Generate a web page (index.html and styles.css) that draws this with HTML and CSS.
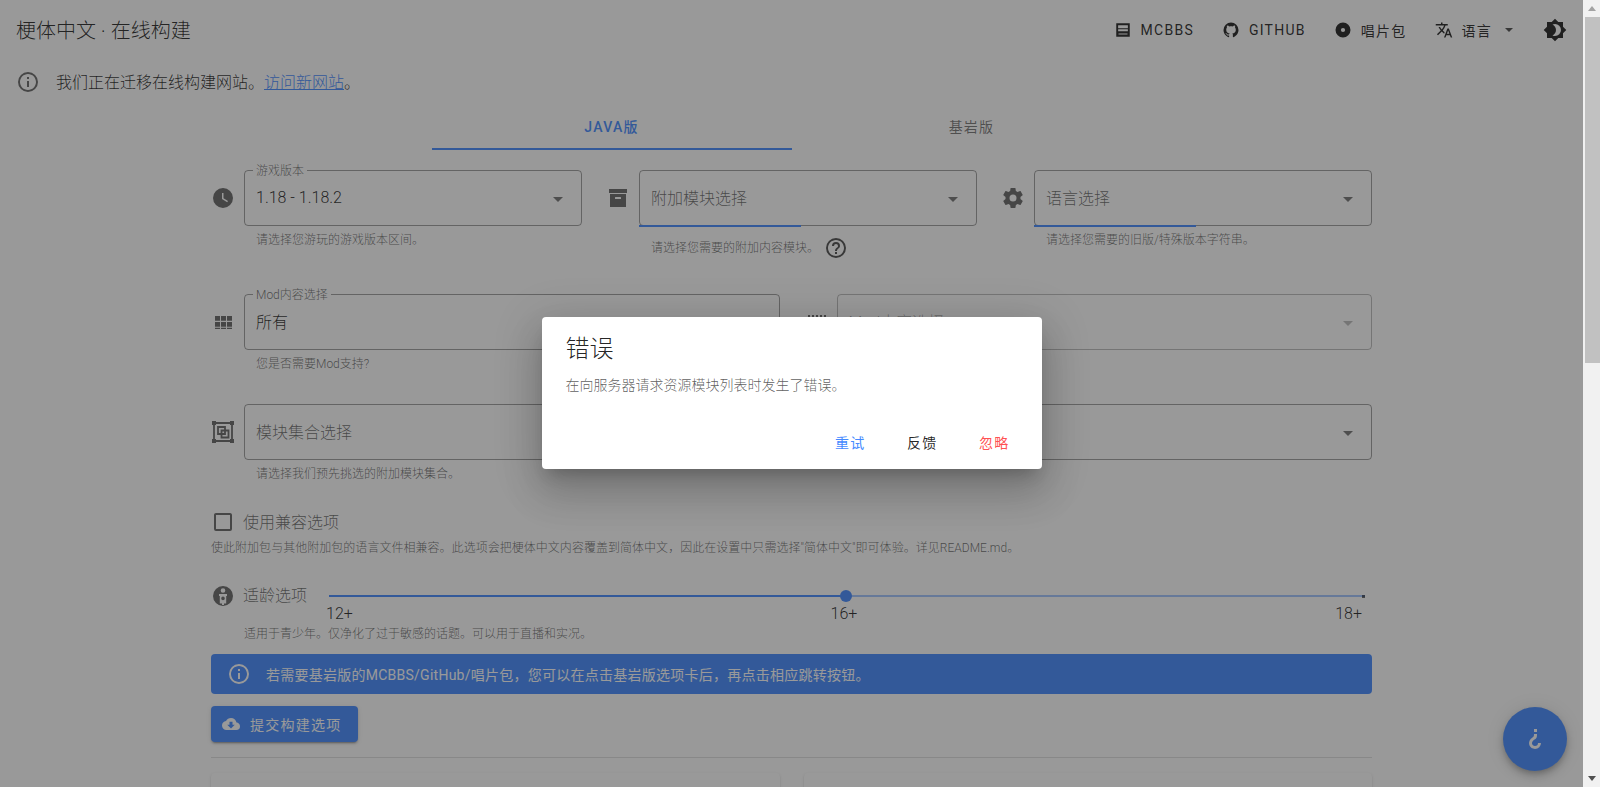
FILE: index.html
```html
<!DOCTYPE html>
<html>

<head>
    <meta charset="UTF-8">
    <title>梗体中文 · 在线构建</title>
    <link rel="stylesheet" href="styles.css">
</head>

<body>

    <div class="page">
        <header class="app-bar">
            <div class="app-title">梗体中文 · 在线构建</div>
            <nav class="app-nav">
                <a class="nav-item">
                    <svg class="nav-icon" viewBox="0 0 24 24"><path fill-rule="evenodd" d="M3,3H21V21H3V3M5.5,5.5V9.5H18.5V5.5H5.5M5.5,11V13.5H18.5V11H5.5M6,16.5V18H18V16.5H6Z"/></svg>
                    <span>MCBBS</span>
                </a>
                <a class="nav-item">
                    <svg class="nav-icon" viewBox="0 0 24 24"><path d="M12,2A10,10 0 0,0 2,12C2,16.42 4.87,20.17 8.84,21.5C9.34,21.58 9.5,21.27 9.5,21C9.5,20.77 9.5,20.14 9.5,19.31C6.73,19.91 6.14,17.97 6.14,17.97C5.68,16.81 5.03,16.5 5.03,16.5C4.12,15.88 5.1,15.9 5.1,15.9C6.1,15.97 6.63,16.93 6.63,16.93C7.5,18.45 8.97,18 9.54,17.76C9.63,17.11 9.89,16.67 10.17,16.42C7.95,16.17 5.62,15.31 5.62,11.5C5.62,10.39 6,9.5 6.65,8.79C6.55,8.54 6.2,7.5 6.75,6.15C6.75,6.15 7.59,5.88 9.5,7.17C10.29,6.95 11.15,6.84 12,6.84C12.85,6.84 13.71,6.95 14.5,7.17C16.41,5.88 17.25,6.15 17.25,6.15C17.8,7.5 17.45,8.54 17.35,8.79C18,9.5 18.38,10.39 18.38,11.5C18.38,15.32 16.04,16.16 13.81,16.41C14.17,16.72 14.5,17.33 14.5,18.26C14.5,19.6 14.5,20.68 14.5,21C14.5,21.27 14.66,21.59 15.17,21.5C19.14,20.16 22,16.42 22,12A10,10 0 0,0 12,2Z"/></svg>
                    <span>GITHUB</span>
                </a>
                <a class="nav-item">
                    <svg class="nav-icon" viewBox="0 0 24 24"><path fill-rule="evenodd" d="M12,2A10,10 0 0,0 2,12A10,10 0 0,0 12,22A10,10 0 0,0 22,12A10,10 0 0,0 12,2M12,9.2A2.8,2.8 0 0,1 14.8,12A2.8,2.8 0 0,1 12,14.8A2.8,2.8 0 0,1 9.2,12A2.8,2.8 0 0,1 12,9.2Z"/></svg>
                    <span>唱片包</span>
                </a>
                <a class="nav-item">
                    <svg class="nav-icon" viewBox="0 0 24 24"><path d="M12.87,15.07L10.33,12.56L10.36,12.53C12.1,10.59 13.34,8.36 14.07,6H17V4H10V2H8V4H1V6H12.17C11.5,7.92 10.44,9.75 9,11.35C8.07,10.32 7.3,9.19 6.69,8H4.69C5.42,9.63 6.42,11.17 7.67,12.56L2.58,17.58L4,19L9,14L12.11,17.11L12.87,15.07M18.5,10H16.5L12,22H14L15.12,19H19.87L21,22H23L18.5,10M15.88,17L17.5,12.67L19.12,17H15.88Z"/></svg>
                    <span>语言</span>
                    <i class="nav-caret"></i>
                </a>
                <svg class="theme-icon" viewBox="0 0 24 24"><path d="M12,18C11.11,18 10.26,17.8 9.5,17.45C11.56,16.5 13,14.42 13,12C13,9.58 11.56,7.5 9.5,6.55C10.26,6.2 11.11,6 12,6A6,6 0 0,1 18,12A6,6 0 0,1 12,18M20,8.69V4H15.31L12,0.69L8.69,4H4V8.69L0.69,12L4,15.31V20H8.69L12,23.31L15.31,20H20V15.31L23.31,12L20,8.69Z"/></svg>
            </nav>
        </header>

        <div class="notice">
            <svg class="icon icon-muted" viewBox="0 0 24 24"><path d="M11,9H13V7H11M12,20C7.59,20 4,16.41 4,12C4,7.59 7.59,4 12,4C16.41,4 20,7.59 20,12C20,16.41 16.41,20 12,20M12,2A10,10 0 0,0 2,12A10,10 0 0,0 12,22A10,10 0 0,0 22,12A10,10 0 0,0 12,2M11,17H13V11H11V17Z"/></svg>
            <p>我们正在迁移在线构建网站。<a class="notice-link">访问新网站</a>。</p>
        </div>

        <div class="tabs">
            <div class="tab tab-active">JAVA版</div>
            <div class="tab">基岩版</div>
        </div>

        <main class="form">
            <div class="row row-3">
                <div class="col">
                    <svg class="icon icon-muted" viewBox="0 0 24 24"><path d="M12,2A10,10 0 0,0 2,12A10,10 0 0,0 12,22A10,10 0 0,0 22,12A10,10 0 0,0 12,2M16.2,16.2L11,13V7H12.5V12.2L17,14.9L16.2,16.2Z"/></svg>
                    <div class="field">
                        <div class="select">
                            <span class="select-label">游戏版本</span>
                            <span class="select-value">1.18 - 1.18.2</span>
                            <i class="caret"></i>
                        </div>
                        <div class="hint">请选择您游玩的游戏版本区间。</div>
                    </div>
                </div>
                <div class="col">
                    <svg class="icon icon-muted" viewBox="0 0 24 24"><path d="M3,3H21V7H3V3M4,8H20V21H4V8M9.5,11A0.5,0.5 0 0,0 9,11.5V13H15V11.5A0.5,0.5 0 0,0 14.5,11H9.5Z"/></svg>
                    <div class="field">
                        <div class="select">
                            <span class="select-placeholder">附加模块选择</span>
                            <i class="caret"></i>
                            <i class="select-loading"></i>
                        </div>
                        <div class="hint hint-help">
                            <span>请选择您需要的附加内容模块。</span>
                            <svg class="icon icon-help" viewBox="0 0 24 24"><path d="M11,18H13V16H11V18M12,2A10,10 0 0,0 2,12A10,10 0 0,0 12,22A10,10 0 0,0 22,12A10,10 0 0,0 12,2M12,20C7.59,20 4,16.41 4,12C4,7.59 7.59,4 12,4C16.41,4 20,7.59 20,12C20,16.41 16.41,20 12,20M12,6A4,4 0 0,0 8,10H10A2,2 0 0,1 12,8A2,2 0 0,1 14,10C14,12 11,11.75 11,15H13C13,12.75 16,12.5 16,10A4,4 0 0,0 12,6Z"/></svg>
                        </div>
                    </div>
                </div>
                <div class="col">
                    <svg class="icon icon-muted" viewBox="0 0 24 24"><path d="M12,15.5A3.5,3.5 0 0,1 8.5,12A3.5,3.5 0 0,1 12,8.5A3.5,3.5 0 0,1 15.5,12A3.5,3.5 0 0,1 12,15.5M19.43,12.97C19.47,12.65 19.5,12.33 19.5,12C19.5,11.67 19.47,11.34 19.43,11L21.54,9.37C21.73,9.22 21.78,8.95 21.66,8.73L19.66,5.27C19.54,5.05 19.27,4.96 19.05,5.05L16.56,6.05C16.04,5.66 15.5,5.32 14.87,5.07L14.5,2.42C14.46,2.18 14.25,2 14,2H10C9.75,2 9.54,2.18 9.5,2.42L9.13,5.07C8.5,5.32 7.96,5.66 7.44,6.05L4.95,5.05C4.73,4.96 4.46,5.05 4.34,5.27L2.34,8.73C2.21,8.95 2.27,9.22 2.46,9.37L4.57,11C4.53,11.34 4.5,11.67 4.5,12C4.5,12.33 4.53,12.65 4.57,12.97L2.46,14.63C2.27,14.78 2.21,15.05 2.34,15.27L4.34,18.73C4.46,18.95 4.73,19.03 4.95,18.95L7.44,17.94C7.96,18.34 8.5,18.68 9.13,18.93L9.5,21.58C9.54,21.82 9.75,22 10,22H14C14.25,22 14.46,21.82 14.5,21.58L14.87,18.93C15.5,18.67 16.04,18.34 16.56,17.94L19.05,18.95C19.27,19.03 19.54,18.95 19.66,18.73L21.66,15.27C21.78,15.05 21.73,14.78 21.54,14.63L19.43,12.97Z"/></svg>
                    <div class="field">
                        <div class="select">
                            <span class="select-placeholder">语言选择</span>
                            <i class="caret"></i>
                            <i class="select-loading"></i>
                        </div>
                        <div class="hint">请选择您需要的旧版/特殊版本字符串。</div>
                    </div>
                </div>
            </div>

            <div class="row row-2">
                <div class="col">
                    <svg class="icon icon-muted" viewBox="0 0 24 24"><path d="M4,6H9V10.8H4V6M10,6H15V10.8H10V6M16,6H21V10.8H16V6M4,11.9H9V16.7H4V11.9M10,11.9H15V16.7H10V11.9M16,11.9H21V16.7H16V11.9M4,17.8H9V19H4V17.8M10,17.8H15V19H10V17.8M16,17.8H21V19H16V17.8Z"/></svg>
                    <div class="field">
                        <div class="select">
                            <span class="select-label">Mod内容选择</span>
                            <span class="select-value">所有</span>
                            <i class="caret"></i>
                        </div>
                        <div class="hint">您是否需要Mod支持?</div>
                    </div>
                </div>
                <div class="col">
                    <svg class="icon icon-muted" viewBox="0 0 24 24"><path d="M4,5H6V19H4V5M8,5H10V19H8V5M12,5H14V19H12V5M16,5H18V19H16V5M20,5H22V19H20V5Z"/></svg>
                    <div class="field">
                        <div class="select select-disabled">
                            <span class="select-placeholder">Mod内容选择</span>
                            <i class="caret"></i>
                        </div>
                    </div>
                </div>
            </div>

            <div class="row row-2 row-last">
                <div class="col">
                    <svg class="icon icon-group" viewBox="0 0 24 24">
                        <path class="group-lines" d="M3,3H21V21H3ZM7,7H14V14H7ZM10.5,10.5H17.5V17.5H10.5Z"/>
                        <path d="M1,1H5V5H1ZM19,1H23V5H19ZM1,19H5V23H1ZM19,19H23V23H19Z"/>
                    </svg>
                    <div class="field">
                        <div class="select">
                            <span class="select-placeholder">模块集合选择</span>
                            <i class="caret"></i>
                        </div>
                        <div class="hint">请选择我们预先挑选的附加模块集合。</div>
                    </div>
                </div>
                <div class="col">
                    <span class="icon"></span>
                    <div class="field">
                        <div class="select">
                            <i class="caret"></i>
                        </div>
                    </div>
                </div>
            </div>

            <label class="check">
                <svg class="icon icon-muted" viewBox="0 0 24 24"><path d="M19,3H5C3.89,3 3,3.89 3,5V19A2,2 0 0,0 5,21H19A2,2 0 0,0 21,19V5C21,3.89 20.1,3 19,3M19,5V19H5V5H19Z"/></svg>
                <span>使用兼容选项</span>
            </label>
            <div class="check-hint">使此附加包与其他附加包的语言文件相兼容。此选项会把梗体中文内容覆盖到简体中文，因此在设置中只需选择"简体中文"即可体验。详见README.md。</div>

            <div class="age">
                <svg class="icon icon-muted" viewBox="0 0 24 24"><path fill-rule="evenodd" d="M12,2A10,10 0 0,0 2,12A10,10 0 0,0 12,22A10,10 0 0,0 22,12A10,10 0 0,0 12,2M12,4.2A2.3,2.3 0 0,1 14.3,6.5A2.3,2.3 0 0,1 12,8.8A2.3,2.3 0 0,1 9.7,6.5A2.3,2.3 0 0,1 12,4.2M8,10H16V12H15.2V19.5H13V21H11V19.5H8.8V12H8V10M12,12.6A1.8,1.8 0 0,0 10.2,14.4A1.8,1.8 0 0,0 12,16.2A1.8,1.8 0 0,0 13.8,14.4A1.8,1.8 0 0,0 12,12.6Z"/></svg>
                <span class="age-label">适龄选项</span>
                <div class="slider">
                    <div class="slider-track">
                        <i class="slider-fill"></i>
                        <i class="slider-rest"></i>
                        <i class="slider-thumb"></i>
                        <i class="slider-end"></i>
                    </div>
                    <div class="slider-ticks">
                        <span>12+</span>
                        <span>16+</span>
                        <span>18+</span>
                    </div>
                </div>
            </div>
            <div class="age-hint">适用于青少年。仅净化了过于敏感的话题。可以用于直播和实况。</div>

            <div class="banner">
                <svg class="icon icon-light" viewBox="0 0 24 24"><path d="M11,9H13V7H11M12,20C7.59,20 4,16.41 4,12C4,7.59 7.59,4 12,4C16.41,4 20,7.59 20,12C20,16.41 16.41,20 12,20M12,2A10,10 0 0,0 2,12A10,10 0 0,0 12,22A10,10 0 0,0 22,12A10,10 0 0,0 12,2M11,17H13V11H11V17Z"/></svg>
                <span>若需要基岩版的MCBBS/GitHub/唱片包，您可以在点击基岩版选项卡后，再点击相应跳转按钮。</span>
            </div>

            <button class="btn-submit">
                <svg class="btn-icon" viewBox="0 0 24 24"><path d="M17,13L12,18L7,13H10V9H14V13M19.35,10.03C18.67,6.59 15.64,4 12,4C9.11,4 6.6,5.64 5.35,8.03C2.34,8.36 0,10.9 0,14A6,6 0 0,0 6,20H19A5,5 0 0,0 24,15C24,12.36 21.95,10.22 19.35,10.03Z"/></svg>
                提交构建选项
            </button>

            <hr class="divider">

            <div class="cards">
                <div class="card"></div>
                <div class="card"></div>
            </div>
        </main>

        <button class="fab">
            <svg class="icon icon-fab" viewBox="0 0 24 24"><path d="M10,19H13V22H10V19M12,2C17.35,2.22 19.68,7.62 16.5,11.67C15.67,12.67 14.33,13.33 13.67,14.17C13,15 13,16 13,17H10C10,15.33 10,13.92 10.67,12.92C11.33,11.92 12.67,11.33 13.5,10.67C15.92,8.43 15.32,5.26 12,5A3,3 0 0,0 9,8H6A6,6 0 0,1 12,2Z"/></svg>
        </button>

        <div class="scrim"></div>

        <div class="dialog-wrap">
            <div class="dialog">
                <div class="dialog-title">错误</div>
                <div class="dialog-text">在向服务器请求资源模块列表时发生了错误。</div>
                <div class="dialog-actions">
                    <button class="btn-text btn-retry">重试</button>
                    <button class="btn-text">反馈</button>
                    <button class="btn-text btn-ignore">忽略</button>
                </div>
            </div>
        </div>
    </div>

    <aside class="scrollbar">
        <i class="scroll-up"></i>
        <div class="scroll-track"><div class="scroll-thumb"></div></div>
        <i class="scroll-down"></i>
    </aside>

</body>

</html>
```

FILE: styles.css
```css
/* Basic Reset */
* {
    box-sizing: border-box;
    margin: 0;
    padding: 0;
}

body {
    display: flex;
    height: 787px;
    overflow: hidden;
    background: #fff;
    color: rgba(0, 0, 0, 0.87);
    font-family: Roboto, "Noto Sans CJK SC", sans-serif;
    font-size: 16px;
    font-weight: 300;
}

.page {
    position: relative;
    flex: 1;
    min-width: 0;
    overflow: hidden;
}

/* App bar */
.app-bar {
    display: flex;
    align-items: center;
    justify-content: space-between;
    height: 60px;
    padding: 0 16px;
}

.app-title {
    padding-bottom: 2px;
    font-size: 20px;
}

.app-nav {
    display: flex;
    align-items: center;
}

.nav-item {
    display: flex;
    align-items: center;
    margin-left: 28px;
    font-size: 14px;
    font-weight: 400;
    letter-spacing: 1.25px;
    color: rgba(0, 0, 0, 0.87);
}

.nav-icon {
    width: 18px;
    height: 18px;
    margin-right: 9px;
    fill: rgba(0, 0, 0, 0.87);
}

.nav-caret {
    display: block;
    width: 0;
    height: 0;
    margin: 0 9px 0 13px;
    border-left: 4px solid transparent;
    border-right: 4px solid transparent;
    border-top: 4px solid rgba(0, 0, 0, 0.7);
}

.theme-icon {
    width: 24px;
    height: 24px;
    margin-left: 21px;
    fill: rgba(0, 0, 0, 0.87);
}

/* Icons */
.icon {
    display: block;
    flex: none;
    width: 24px;
    height: 24px;
}

.icon-muted {
    fill: rgba(0, 0, 0, 0.6);
}

.icon-group {
    fill: rgb(102, 102, 102);
}

.group-lines {
    fill: none;
    stroke: rgb(102, 102, 102);
    stroke-width: 1.8;
}

.icon-help {
    margin-left: 5px;
    fill: rgba(0, 0, 0, 0.7);
}

.icon-light {
    fill: #fff;
}

.icon-fab {
    fill: #fff;
    transform: rotate(180deg);
}

/* Migration notice */
.notice {
    display: flex;
    align-items: center;
    gap: 16px;
    height: 44px;
    padding: 0 16px;
}

.notice p {
    padding-bottom: 2px;
}

.notice-link {
    color: #448aff;
    text-decoration: underline;
}

/* Tabs */
.tabs {
    display: grid;
    grid-template-columns: 360px 360px;
    justify-content: center;
    height: 46px;
}

.tab {
    display: flex;
    align-items: center;
    justify-content: center;
    padding-bottom: 2px;
    font-size: 14px;
    font-weight: 400;
    letter-spacing: 1.25px;
    color: rgba(0, 0, 0, 0.54);
}

.tab-active {
    color: #448aff;
    font-weight: 500;
    border-bottom: 2px solid #448aff;
    padding-bottom: 0;
}

/* Form */
.form {
    width: 1161px;
    margin: 20px auto 0;
}

.row {
    display: grid;
    gap: 24px;
    margin-bottom: 34px;
}

.row-last {
    margin-bottom: 30px;
}

.row-3 {
    grid-template-columns: repeat(3, 1fr);
}

.row-2 {
    grid-template-columns: repeat(2, 1fr);
}

.col {
    display: flex;
    align-items: flex-start;
    gap: 9px;
}

.col > .icon {
    margin-top: 16px;
}

.field {
    flex: 1;
    min-width: 0;
}

.select {
    position: relative;
    display: flex;
    align-items: center;
    height: 56px;
    padding: 0 11px;
    border: 1px solid rgba(0, 0, 0, 0.38);
    border-radius: 4px;
}

.select-label {
    position: absolute;
    top: -6px;
    left: 8px;
    padding: 0 3px;
    background: #fff;
    font-size: 12px;
    line-height: 12px;
    color: rgba(0, 0, 0, 0.6);
}

.select-value {
    padding-bottom: 2px;
}

.select-placeholder {
    padding-bottom: 3px;
    color: rgba(0, 0, 0, 0.6);
}

.caret {
    position: absolute;
    top: 26px;
    right: 18px;
    width: 0;
    height: 0;
    border-left: 5px solid transparent;
    border-right: 5px solid transparent;
    border-top: 5px solid rgba(0, 0, 0, 0.54);
}

.select-disabled {
    border-color: rgba(0, 0, 0, 0.26);
}

.select-disabled .select-placeholder {
    color: rgba(0, 0, 0, 0.38);
}

.select-disabled .caret {
    border-top-color: rgba(0, 0, 0, 0.26);
}

.select-loading {
    position: absolute;
    left: -1px;
    bottom: -2px;
    width: 162px;
    height: 2px;
    background: #448aff;
}

.hint {
    padding: 8px 12px 0;
    font-size: 12px;
    line-height: 12px;
    color: rgba(0, 0, 0, 0.6);
}

.hint-help {
    display: flex;
    align-items: center;
    padding-top: 10px;
}

/* Compat checkbox */
.check {
    display: flex;
    align-items: center;
    gap: 8px;
    height: 24px;
    color: rgba(0, 0, 0, 0.6);
}

.check span {
    padding-bottom: 2px;
}

.check-hint {
    margin-top: 8px;
    font-size: 12px;
    line-height: 12px;
    letter-spacing: 0.03px;
    color: rgba(0, 0, 0, 0.6);
}

/* Age slider */
.age {
    display: flex;
    align-items: flex-start;
    margin-top: 30px;
}

.age-label {
    width: 86px;
    margin-left: 8px;
    line-height: 24px;
    color: rgba(0, 0, 0, 0.6);
}

.slider {
    width: 1036px;
}

.slider-track {
    position: relative;
    height: 24px;
}

.slider-fill {
    position: absolute;
    top: 11px;
    left: 0;
    width: 517px;
    height: 2px;
    background: #448aff;
}

.slider-rest {
    position: absolute;
    top: 11px;
    left: 517px;
    right: 0;
    height: 2px;
    background: #a2c5ff;
}

.slider-thumb {
    position: absolute;
    top: 6px;
    left: 511px;
    width: 12px;
    height: 12px;
    border-radius: 50%;
    background: #448aff;
}

.slider-end {
    position: absolute;
    top: 11px;
    right: 0;
    width: 3px;
    height: 3px;
    background: rgba(0, 0, 0, 0.6);
}

.slider-ticks {
    display: flex;
    justify-content: space-between;
    margin: -4px 3px 0 -3px;
    line-height: 20px;
}

.age-hint {
    margin: 4px 0 0 33px;
    font-size: 12px;
    line-height: 12px;
    color: rgba(0, 0, 0, 0.6);
}

/* Info banner */
.banner {
    display: flex;
    align-items: center;
    gap: 15px;
    height: 40px;
    margin-top: 14px;
    padding: 0 16px;
    border-radius: 4px;
    background: #448aff;
    color: #fff;
    font-size: 14px;
    font-weight: 400;
    letter-spacing: 0.25px;
}

/* Submit */
.btn-submit {
    display: flex;
    align-items: center;
    height: 36px;
    margin-top: 12px;
    padding: 0 16px 0 11px;
    border: none;
    border-radius: 4px;
    background: #448aff;
    color: #fff;
    font-family: inherit;
    font-size: 14px;
    font-weight: 400;
    letter-spacing: 1.25px;
    box-shadow: 0 3px 1px -2px rgba(0, 0, 0, 0.2), 0 2px 2px 0 rgba(0, 0, 0, 0.14), 0 1px 5px 0 rgba(0, 0, 0, 0.12);
}

.btn-icon {
    width: 18px;
    height: 18px;
    margin-right: 10px;
    fill: #fff;
}

.divider {
    height: 1px;
    margin-top: 15px;
    border: none;
    background: rgba(0, 0, 0, 0.12);
}

.cards {
    display: grid;
    grid-template-columns: repeat(2, 1fr);
    gap: 24px;
    margin-top: 15px;
}

.card {
    height: 200px;
    border-radius: 4px;
    background: #fff;
    box-shadow: 0 2px 1px -1px rgba(0, 0, 0, 0.2), 0 1px 1px 0 rgba(0, 0, 0, 0.14), 0 1px 3px 0 rgba(0, 0, 0, 0.12);
}

/* Floating help button */
.fab {
    position: absolute;
    top: 707px;
    left: 1503px;
    display: flex;
    align-items: center;
    justify-content: center;
    width: 64px;
    height: 64px;
    border: none;
    border-radius: 50%;
    background: #448aff;
    box-shadow: 0 3px 5px -1px rgba(0, 0, 0, 0.2), 0 6px 10px 0 rgba(0, 0, 0, 0.14), 0 1px 18px 0 rgba(0, 0, 0, 0.12);
}

/* Dialog */
.scrim {
    position: absolute;
    top: 0;
    left: 0;
    right: 0;
    bottom: 0;
    background: rgba(33, 33, 33, 0.46);
}

.dialog-wrap {
    position: absolute;
    top: 0;
    left: 0;
    right: 0;
    bottom: 0;
    display: flex;
    align-items: center;
    justify-content: center;
    padding-bottom: 1px;
}

.dialog {
    width: 500px;
    height: 152px;
    padding-top: 16px;
    border-radius: 4px;
    background: #fff;
    box-shadow: 0 11px 15px -7px rgba(0, 0, 0, 0.2), 0 24px 38px 3px rgba(0, 0, 0, 0.14), 0 9px 46px 8px rgba(0, 0, 0, 0.12);
}

.dialog-title {
    padding: 0 24px;
    font-size: 24px;
    line-height: 32px;
}

.dialog-text {
    margin-top: 10px;
    padding: 0 24px;
    font-size: 14px;
    line-height: 20px;
    color: rgba(0, 0, 0, 0.65);
}

.dialog-actions {
    display: flex;
    justify-content: flex-end;
    gap: 9.5px;
    margin-top: 29px;
    padding-right: 16px;
}

.btn-text {
    height: 36px;
    padding: 0 16px;
    border: none;
    background: none;
    color: rgba(0, 0, 0, 0.87);
    font-family: inherit;
    font-size: 14px;
    font-weight: 400;
    letter-spacing: 1.25px;
}

.btn-retry {
    color: #448aff;
}

.btn-ignore {
    color: #ff5252;
}

/* Scrollbar */
.scrollbar {
    display: flex;
    flex: none;
    flex-direction: column;
    align-items: center;
    width: 17px;
    background: #f1f1f1;
}

.scroll-up,
.scroll-down {
    flex: none;
    width: 0;
    height: 0;
    margin: 6px 0;
    border-left: 4px solid transparent;
    border-right: 4px solid transparent;
}

.scroll-up {
    border-bottom: 5px solid #a3a3a3;
}

.scroll-down {
    border-top: 5px solid #505050;
}

.scroll-track {
    flex: 1;
    width: 100%;
}

.scroll-thumb {
    height: 346px;
    margin-left: 2px;
    background: #c1c1c1;
}
```
